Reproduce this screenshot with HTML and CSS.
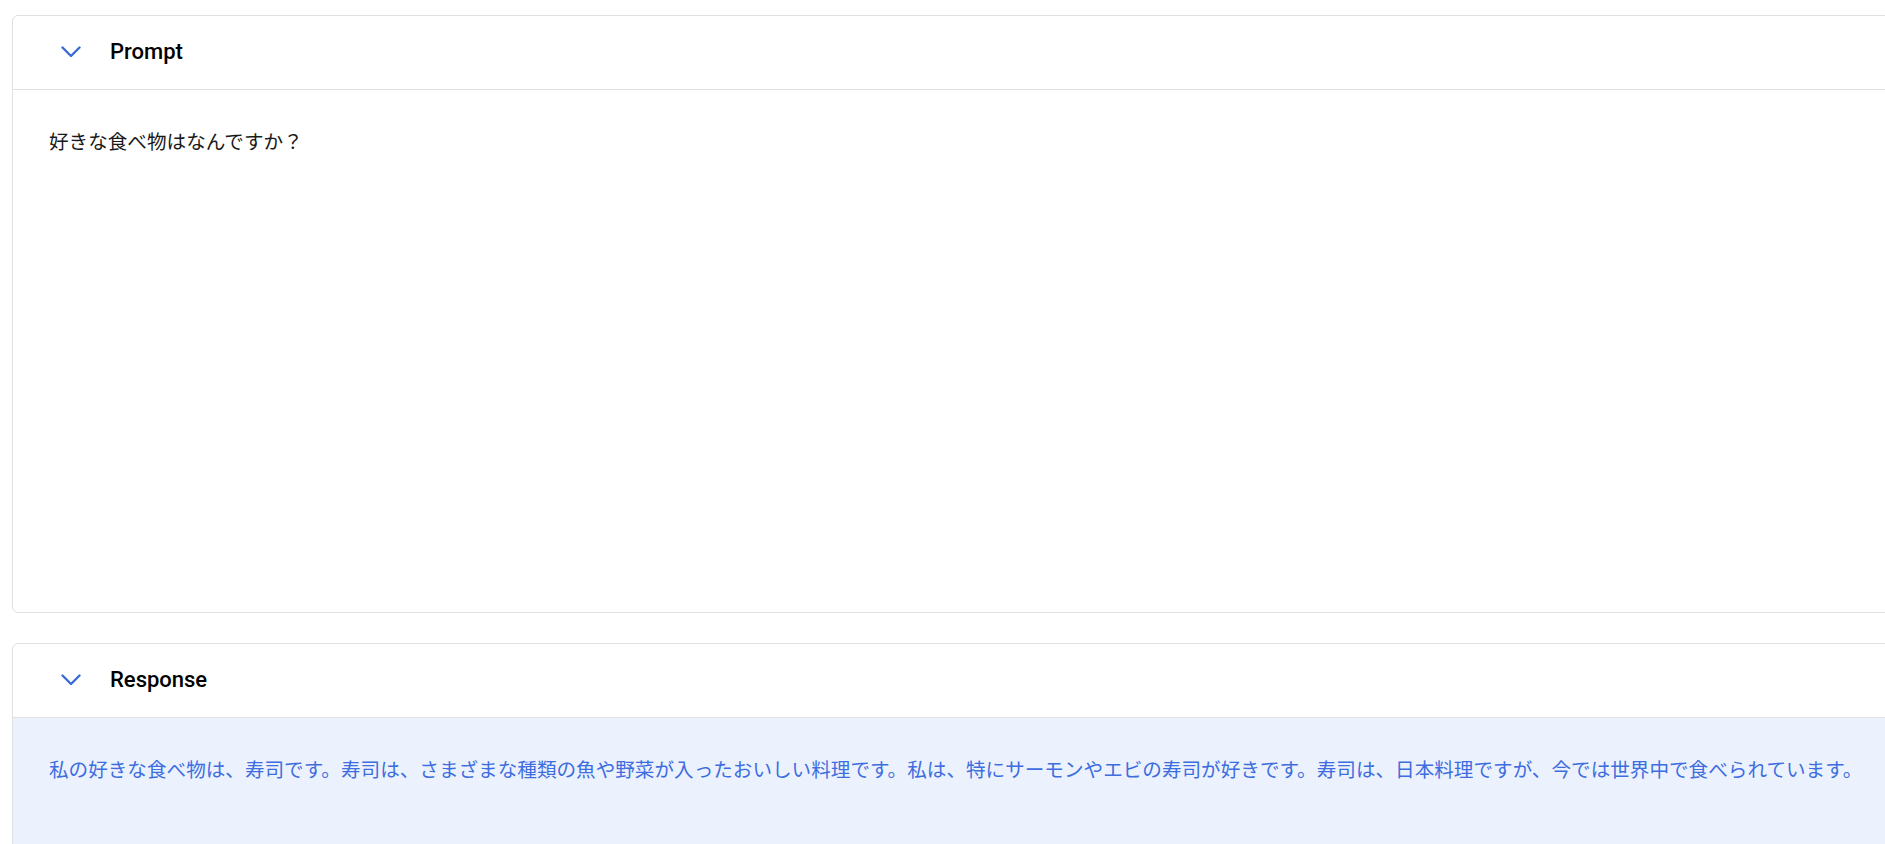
FILE: index.html
```html
<!DOCTYPE html>
<html lang="ja">
<head>
<meta charset="utf-8">
<title>Prompt / Response</title>
<link rel="stylesheet" href="styles.css">
</head>
<body>
<main class="page">
  <section class="card">
    <header class="card-header">
      <svg class="chevron" width="20" height="12" viewBox="0 0 20 12" aria-hidden="true"><polyline points="1.5,1.5 10,10 18.5,1.5" fill="none" stroke="currentColor" stroke-width="2.4" stroke-linecap="round" stroke-linejoin="round"/></svg>
      <h2 class="card-title">Prompt</h2>
    </header>
    <div class="card-body prompt-body">
      <p class="text">好きな食べ物はなんですか？</p>
    </div>
  </section>
  <section class="card">
    <header class="card-header">
      <svg class="chevron" width="20" height="12" viewBox="0 0 20 12" aria-hidden="true"><polyline points="1.5,1.5 10,10 18.5,1.5" fill="none" stroke="currentColor" stroke-width="2.4" stroke-linecap="round" stroke-linejoin="round"/></svg>
      <h2 class="card-title">Response</h2>
    </header>
    <div class="card-body response-body">
      <p class="text response-text">私の好きな食べ物は、寿司です。寿司は、さまざまな種類の魚や野菜が入ったおいしい料理です。私は、特にサーモンやエビの寿司が好きです。寿司は、日本料理ですが、今では世界中で食べられています。</p>
    </div>
  </section>
</main>
</body>
</html>
```

FILE: styles.css
```css
html, body {
  margin: 0;
  padding: 0;
  background: #ffffff;
  overflow: hidden;
  height: 844px;
}

body {
  font-family: Roboto, "Noto Sans CJK JP", sans-serif;
  color: #111111;
}

.page {
  padding: 15px 0 0 12px;
  display: flex;
  flex-direction: column;
  gap: 30px;
  width: 1960px;
  height: 829px;
  overflow: hidden;
}

.card {
  border: 1px solid #e0e0e0;
  border-radius: 6px;
  overflow: hidden;
  background: #ffffff;
  flex: none;
}

.card-header {
  height: 71px;
  display: flex;
  align-items: center;
  padding: 0 0 2px 48px;
  border-bottom: 1px solid #e0e0e0;
  box-sizing: content-box;
}

.chevron {
  color: #3b6bd6;
  flex: none;
  margin-top: 1px;
}

.card-title {
  margin: 0 0 0 29px;
  font-family: Roboto, sans-serif;
  font-weight: 500;
  font-size: 22px;
  color: #000000;
}

.card-body {
  padding: 36px 36px 0 36px;
}

.prompt-body {
  height: 486px;
}

.response-body {
  background: #ebf2fd;
  height: 160px;
}

.text {
  margin: 0;
  font-family: "Noto Sans CJK JP", sans-serif;
  font-size: 19.6px;
  line-height: 29px;
  color: #1a1a1a;
}

.response-text {
  color: #3e6de0;
}
```
